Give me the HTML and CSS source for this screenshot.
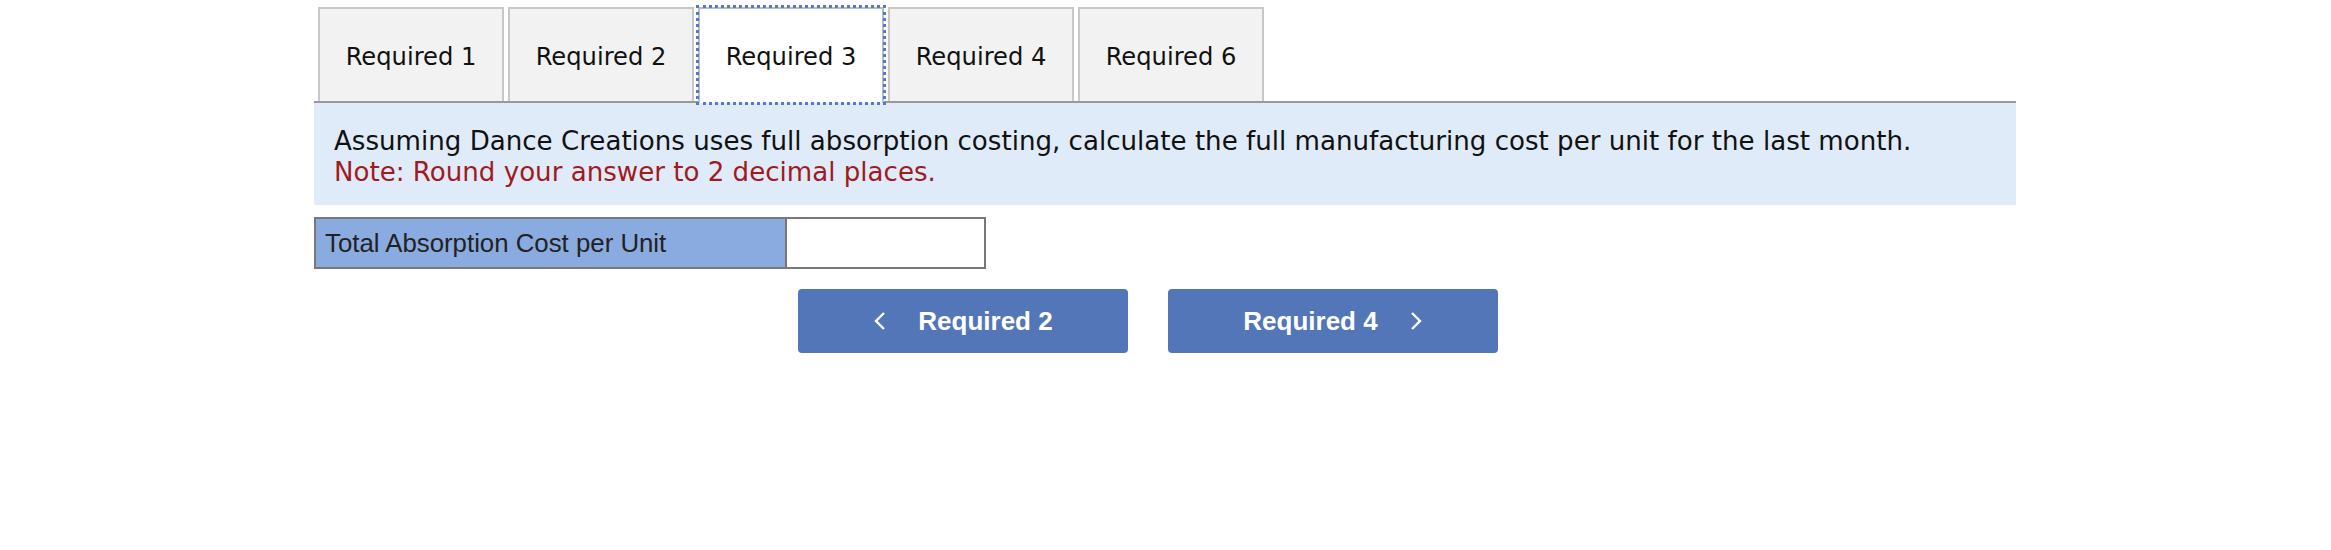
FILE: index.html
```html
<!DOCTYPE html>
<html lang="en">
<head>
    <meta charset="UTF-8">
    <title>Required 3</title>
    <link rel="stylesheet" href="styles.css">
</head>
<body>
    <div class="question">
        <ul class="tabs">
            <li class="tab">Required 1</li>
            <li class="tab">Required 2</li>
            <li class="tab active">Required 3</li>
            <li class="tab">Required 4</li>
            <li class="tab">Required 6</li>
        </ul>

        <div class="prompt">
            <p>Assuming Dance Creations uses full absorption costing, calculate the full manufacturing cost per unit for the last month.</p>
            <p class="note">Note: Round your answer to 2 decimal places.</p>
        </div>

        <table class="answer">
            <tr>
                <td class="answer-label">Total Absorption Cost per Unit</td>
                <td class="answer-cell"><input type="text" class="answer-input"></td>
            </tr>
        </table>

        <div class="nav">
            <button class="nav-btn">
                <svg class="chevron" width="14" height="20" viewBox="0 0 14 20">
                    <polyline points="11,2 3,10 11,18" fill="none" stroke="#fff" stroke-width="2.4"/>
                </svg>
                <span>Required 2</span>
            </button>
            <button class="nav-btn">
                <span>Required 4</span>
                <svg class="chevron" width="14" height="20" viewBox="0 0 14 20">
                    <polyline points="3,2 11,10 3,18" fill="none" stroke="#fff" stroke-width="2.4"/>
                </svg>
            </button>
        </div>
    </div>
</body>
</html>
```

FILE: styles.css
```css
* {
    margin: 0;
    padding: 0;
    box-sizing: border-box;
}

body {
    background: #fff;
    font-family: 'DejaVu Sans', Verdana, sans-serif;
    color: #111;
}

.question {
    width: 1702px;
    margin-left: 314px;
}

.tabs {
    display: flex;
    align-items: flex-end;
    gap: 4px;
    list-style: none;
    padding: 7px 0 0 4px;
    border-bottom: 2px solid #999;
}

.tab {
    width: 186px;
    height: 94px;
    display: flex;
    align-items: center;
    justify-content: center;
    padding-top: 3px;
    background: #f2f2f2;
    border: 2px solid #c8c8c8;
    border-bottom: none;
    font-size: 24.2px;
    color: #111;
}

.tab.active {
    position: relative;
    height: 96px;
    margin-bottom: -2px;
    padding-top: 1px;
    background: #fff;
    border-color: #bcbcbc;
    outline: 3px dotted #4f7cc9;
    outline-offset: -1px;
}

.prompt {
    background: #dfebf8;
    padding: 23px 20px 17px;
    font-size: 26.1px;
    line-height: 31px;
}

.note {
    color: #a01a1e;
}

.answer {
    margin-top: 12px;
    border-collapse: collapse;
    border: 2px solid #777;
}

.answer td {
    height: 48px;
    padding: 0;
}

.answer-label {
    width: 471px;
    background: #8aabe0;
    border-right: 2px solid #777;
    padding-left: 9px !important;
    font-family: 'Liberation Sans', Arial, sans-serif;
    font-size: 25.8px;
    color: #222;
}

.answer-cell {
    width: 199px;
    background: #fff;
}

.answer-input {
    width: 100%;
    height: 48px;
    border: none;
    outline: none;
    background: transparent;
}

.nav {
    display: flex;
    gap: 40px;
    margin: 20px 0 0 484px;
}

.nav-btn {
    width: 330px;
    height: 64px;
    display: flex;
    align-items: center;
    justify-content: center;
    gap: 31px;
    background: #5276b8;
    border: none;
    border-radius: 4px;
    color: #fff;
    font-family: 'Liberation Sans', Arial, sans-serif;
    font-weight: bold;
    font-size: 26px;
}

.chevron {
    display: block;
}
```
